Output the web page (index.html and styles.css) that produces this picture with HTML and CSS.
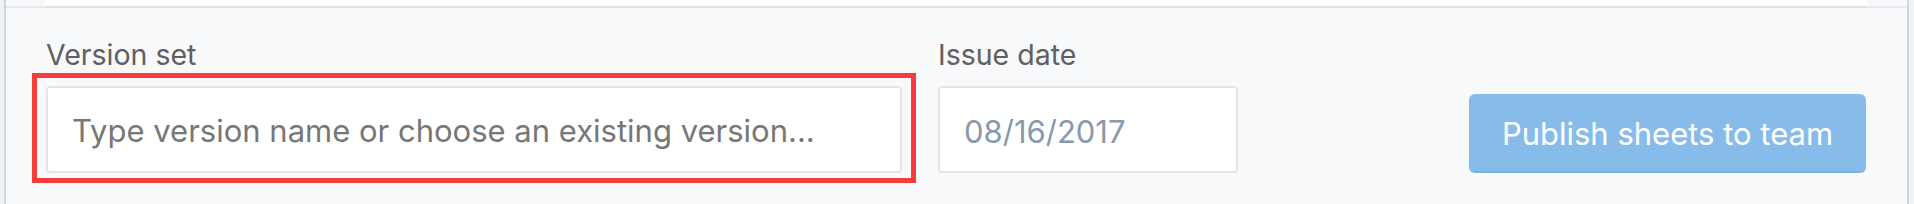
FILE: index.html
```html
<!DOCTYPE html>
<html lang="en">
<head>
    <meta charset="UTF-8">
    <meta name="viewport" content="width=device-width, initial-scale=1.0">
    <title>Publish sheets</title>
    <link rel="stylesheet" href="styles.css">
</head>
<body>
    <div class="panel">
        <!-- strip of the card above -->
        <div class="top-strip">
            <div class="top-card"></div>
        </div>

        <div class="publish-row">
            <div class="field version-field">
                <label for="versionSet" class="field-label">Version set</label>
                <div class="highlight">
                    <input type="text" id="versionSet" class="text-input version-input" placeholder="Type version name or choose an existing version...">
                </div>
            </div>

            <div class="field date-field">
                <label for="issueDate" class="field-label">Issue date</label>
                <input type="text" id="issueDate" class="text-input date-input" value="08/16/2017">
            </div>

            <button class="publish-btn" disabled>Publish sheets to team</button>
        </div>
    </div>
</body>
</html>
```

FILE: styles.css
```css
html, body {
    margin: 0;
    padding: 0;
    background: #f0f3f6;
}
body {
    font-family: Inter, "Noto Sans", sans-serif;
    width: 1914px;
    height: 204px;
    overflow: hidden;
    padding-left: 4px;
    box-sizing: border-box;
}
.panel {
    width: 1905px;
    height: 204px;
    background: #f8f9fb;
    border-left: 2px solid #c9d6e3;
    border-right: 2px solid #c9d6e3;
    box-sizing: border-box;
}
.top-strip {
    height: 6px;
    border-bottom: 2px solid #e6e8eb;
    padding: 0 41px 0 40px;
}
.top-card {
    height: 6px;
    background: #fff;
    border-bottom: 2px solid #dfe0e2;
}
.publish-row {
    display: flex;
    align-items: flex-start;
    padding: 30px 41px 0 26px;
}
.field {
    display: flex;
    flex-direction: column;
}
.field-label {
    font-size: 28.5px;
    line-height: 34px;
    color: #606060;
    margin-bottom: 1px;
}
.version-field .field-label {
    padding-left: 14px;
}
.highlight {
    border: 5px solid #f53c3c;
    padding: 8px 9px 5px 9px;
}
.date-field {
    margin-left: 22px;
}
.date-field .field-label {
    margin-bottom: 14px;
}
.text-input {
    height: 87px;
    box-sizing: border-box;
    border: 2px solid #e3e4e6;
    border-radius: 4px;
    background: #fff;
    padding: 0 24px;
    font-family: inherit;
    font-size: 31px;
    outline: none;
}
.version-input {
    width: 856px;
    color: #707070;
    padding-top: 2px;
}
.version-input::placeholder {
    color: #777;
}
.date-input {
    width: 300px;
    color: #8799ab;
    padding-top: 4px;
}
.publish-btn {
    margin-left: auto;
    margin-top: 56px;
    width: 397px;
    height: 79px;
    background: #87bcea;
    border: none;
    border-bottom: 2px solid #7eb0dc;
    border-radius: 6px;
    color: #fff;
    font-family: inherit;
    font-size: 31px;
    padding: 2px 0 0;
}
```
